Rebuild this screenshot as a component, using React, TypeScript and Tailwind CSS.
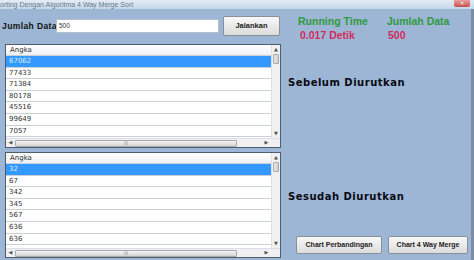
import React from 'react';

const before = ['67062', '77433', '71384', '80178', '45516', '99649', '7057'];
const after = ['32', '67', '342', '345', '567', '636', '636'];

function Grid({ rows, height }: { rows: string[]; height: string }) {
    return (
        <div className={'flex flex-col w-[276px] border border-[#4d5d70] bg-white ' + height}>
            <div className="flex flex-1 min-h-0">
                <div className="flex flex-col flex-1 min-w-0">
                    <div className="h-[11px] border-b border-[#c9d0d8] bg-gradient-to-b from-white to-[#eef1f5] flex items-center pl-[4px] text-[7px] text-[#333]">
                        Angka
                    </div>
                    {rows.map((r, i) => (
                        <div
                            key={i}
                            className={
                                i === 0
                                    ? 'h-[11.6px] bg-[#3399ff] border-b border-[#c9d0d8] flex items-center pl-[3px] text-[7px] text-[#d8ecff]'
                                    : 'h-[11.6px] bg-white border-b border-[#c9d0d8] flex items-center pl-[3px] text-[7px] text-[#333]'
                            }
                        >
                            {r}
                        </div>
                    ))}
                </div>
                {/* vertical scrollbar */}
                <div className="w-[9px] flex flex-col bg-[#f0f0f0] border-l border-[#dde]">
                    <div className="h-[9px] flex items-center justify-center text-[5px] text-[#555]">▲</div>
                    <div className="h-[10px] mx-[1px] bg-gradient-to-r from-[#e8e8e8] to-[#cfcfcf] border border-[#aaa] rounded-[1px]" />
                    <div className="flex-1" />
                    <div className="h-[9px] flex items-center justify-center text-[5px] text-[#555]">▼</div>
                </div>
            </div>
            {/* horizontal scrollbar */}
            <div className="h-[9px] flex items-center bg-[#f0f0f0] border-t border-[#dde]">
                <div className="w-[9px] flex items-center justify-center text-[5px] text-[#555]">◀</div>
                <div className="w-[222px] h-[7px] bg-gradient-to-b from-[#f4f4f4] to-[#d4d4d4] border border-[#aaa] rounded-[1px] flex items-center justify-center">
                    <div className="text-[4px] text-[#777] leading-none">|||</div>
                </div>
                <div className="flex-1" />
                <div className="w-[9px] flex items-center justify-center text-[5px] text-[#555]">▶</div>
                <div className="w-[9px]" />
            </div>
        </div>
    );
}

function WinButton({ label, className }: { label: string; className: string }) {
    return (
        <div
            className={
                'flex items-center justify-center border border-[#8a9099] rounded-[2px] bg-gradient-to-b from-[#f8f8f8] to-[#dcdcdc] font-bold text-[#222] whitespace-nowrap font-["Liberation_Sans",sans-serif] ' +
                className
            }
        >
            {label}
        </div>
    );
}

export default function App() {
    return (
        <div className="w-[474px] h-[260px] overflow-hidden flex flex-col bg-[#9db6d5] font-['DejaVu_Sans',sans-serif]">
            {/* Title bar */}
            <div className="h-[9px] flex items-center justify-between bg-gradient-to-b from-[#e4ecf5] to-[#c6d6ea] overflow-hidden">
                <div className="text-[7px] leading-none text-[#6a7a8c] whitespace-nowrap font-['Liberation_Sans',sans-serif]">
                    orting Dengan Algoritma 4 Way Merge Sort
                </div>
                <div className="w-[16px] h-[7px] mr-[4px] -mt-[2px] rounded-b-[2px] bg-gradient-to-b from-[#e8a0a0] to-[#c84a4a] flex items-center justify-center text-[5px] text-white">
                    ✕
                </div>
            </div>

            <div className="flex flex-1 min-h-0">
                <div className="flex flex-1 min-w-0">
                    {/* Left column */}
                    <div className="flex flex-col w-[285px]">
                        <div className="flex items-center h-[33px] pt-[1px]">
                            <div className="ml-[2px] w-[53px] text-[8.5px] font-bold text-[#111] tracking-[0.4px] whitespace-nowrap font-['Liberation_Sans',sans-serif]">
                                Jumlah Data
                            </div>
                            <div className="ml-[1px] w-[163px] h-[14px] bg-white border border-[#b4bfcc] flex items-center pl-[2px] text-[6.5px] text-[#333] font-['Liberation_Sans',sans-serif]">
                                500
                            </div>
                            <WinButton label="Jalankan" className="ml-[4px] w-[57px] h-[20px] text-[7.5px]" />
                        </div>
                        <div className="ml-[5px] mt-[2px]">
                            <Grid rows={before} height="h-[104px]" />
                        </div>
                        <div className="ml-[5px] mt-[4px]">
                            <Grid rows={after} height="h-[106px]" />
                        </div>
                    </div>

                    {/* Right column */}
                    <div className="flex flex-col flex-1 min-w-0">
                        <div className="flex pt-[7px] h-[33px]">
                            <div className="ml-[13px] flex flex-col w-[89px] font-['Liberation_Sans',sans-serif] font-bold">
                                <div className="text-[10.5px] leading-[11px] text-[#2f9a3e]">Running Time</div>
                                <div className="ml-[2px] mt-[3px] text-[10.5px] leading-[11px] text-[#d32a5e]">0.017 Detik</div>
                            </div>
                            <div className="flex flex-col font-['Liberation_Sans',sans-serif] font-bold">
                                <div className="text-[10.5px] leading-[11px] text-[#2f9a3e]">Jumlah Data</div>
                                <div className="ml-[1px] mt-[3px] text-[10.5px] leading-[11px] text-[#d32a5e]">500</div>
                            </div>
                        </div>
                        <div className="ml-[3px] mt-[34px] h-[14px] leading-[14px] text-[10px] font-black text-[#0a0a14] tracking-[0.5px] whitespace-nowrap">
                            Sebelum Diurutkan
                        </div>
                        <div className="ml-[3px] mt-[100px] h-[14px] leading-[14px] text-[10px] font-black text-[#0a0a14] tracking-[0.5px] whitespace-nowrap">
                            Sesudah Diurutkan
                        </div>
                        <div className="flex mt-[32px] ml-[11px] gap-[6px]">
                            <WinButton label="Chart Perbandingan" className="w-[86px] h-[18px] text-[7px]" />
                            <WinButton label="Chart 4 Way Merge" className="w-[80px] h-[18px] text-[7px]" />
                        </div>
                    </div>
                </div>
                <div className="w-[3px] bg-[#7d8ea3]" />
            </div>
        </div>
    );
}
